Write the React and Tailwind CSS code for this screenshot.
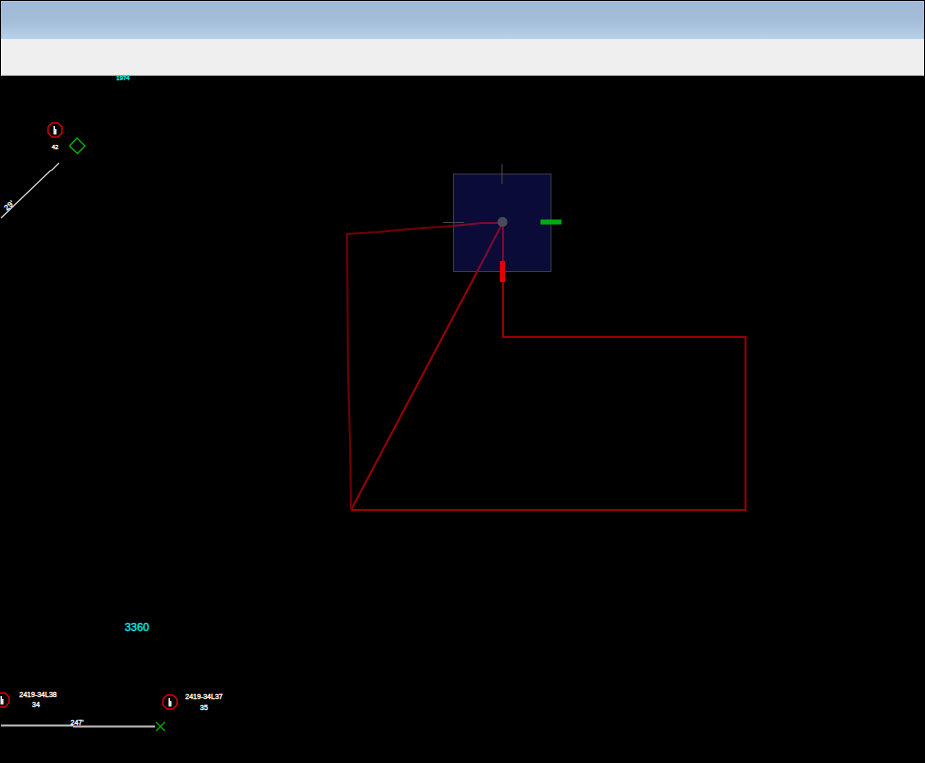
const LABELS = [
  { text: "3360", x: 137, y: 555, size: 11, color: "#00f0f0" },
  { text: "1974", x: 123, y: 4, size: 6, color: "#00f0f0" },
  { text: "42", x: 55, y: 73, size: 6 },
  { text: "2419-34L38", x: 38, y: 621, size: 7 },
  { text: "34", x: 36, y: 631, size: 7 },
  { text: "2419-34L37", x: 204, y: 623, size: 7 },
  { text: "35", x: 204, y: 634, size: 7 },
  { text: "247'", x: 77, y: 649, size: 7 },
];

function Label({ text, x, y, size, color = "#ffffff" }) {
  return (
    <text
      x={x}
      y={y}
      fontSize={size}
      textAnchor="middle"
      fill={color}
      stroke={color}
      strokeWidth="0.3"
    >
      {text}
    </text>
  );
}

// survey point: red ring with a small tick inside
function Station({ x, y }) {
  return (
    <g transform={`translate(${x} ${y})`}>
      <path
        d="M-3 -7H3L7 -3V3L3 7H-3L-7 3V-3Z"
        fill="none"
        stroke="#d80000"
        strokeWidth="1.4"
        strokeLinejoin="round"
      />
      <path d="M-1.500 -4H0V-1H1.500V4.500H-1.500Z" fill="#f0f0f0" />
    </g>
  );
}

function Drawing() {
  return (
    <svg
      viewBox="0 0 925 687"
      preserveAspectRatio="xMinYMin meet"
      className="block h-auto w-full font-['Liberation_Sans',sans-serif]"
      role="img"
      aria-label="Drawing"
    >
      {/* selection square */}
      <rect x="453.5" y="98" width="97.5" height="97.5" fill="#0b0b37" stroke="#3b3b4c" />

      {/* boundary */}
      <g fill="none" stroke="#960000" strokeWidth="2">
        <path d="M503 187V261H745.500V434H351" />
        <path d="M351 434L477 196" />
        <path d="M351 434L350 365L348 296L347 158L378 156L410 153L453 150" stroke="#700000" />
      </g>
      <g fill="none" stroke="#7a0a30" strokeWidth="2">
        <path d="M503 146V187" />
        <path d="M503 146L477 196" />
        <path d="M453 150L482 147H503" />
      </g>

      {/* axes and handles */}
      <path d="M502 88V108M443 146.500H464" stroke="#4a4a4e" />
      <path d="M502.500 185V206" stroke="#e30000" strokeWidth="5" />
      <path d="M540.500 146H561.500" stroke="#00ac12" strokeWidth="5" />
      <circle cx="502.5" cy="146" r="5" fill="#4a4a58" />

      {/* measured lines */}
      <path d="M1 142L50 95L52 94L59 87" fill="none" stroke="#d0d0d0" strokeWidth="1.3" />
      <path d="M1 649.500H73M73 650.500H155" stroke="#bcbcbc" strokeWidth="2" />

      <path
        d="M77 62L85 70L77.500 77.500L69.500 70Z"
        fill="none"
        stroke="#00b400"
        strokeWidth="1.3"
      />
      <path d="M156 646L165 655M165 646L156 655" stroke="#00a800" strokeWidth="1.3" />

      <Station x={55} y={54} />
      <Station x={2} y={624} />
      <Station x={170} y={626} />

      {LABELS.map((label) => (
        <Label key={label.text} {...label} />
      ))}
      <text
        transform="translate(7 135) rotate(-43)"
        fontSize="8"
        fontWeight="700"
        fill="#ffffff"
      >
        29&apos;
      </text>
    </svg>
  );
}

export default function App() {
  return (
    <div className="min-h-screen overflow-hidden bg-black">
      <header className="border border-b-0 border-black">
        <div className="h-[38px] border border-b-0 border-[#aecbe8] bg-linear-to-b from-[#9fb8d5] via-[#a3bcd8] to-[#b8d1eb]" />
        <div className="h-[37px] border-x border-b border-white border-b-[#a0a0a0] bg-[#efefef]" />
      </header>
      <main>
        <Drawing />
      </main>
    </div>
  );
}
